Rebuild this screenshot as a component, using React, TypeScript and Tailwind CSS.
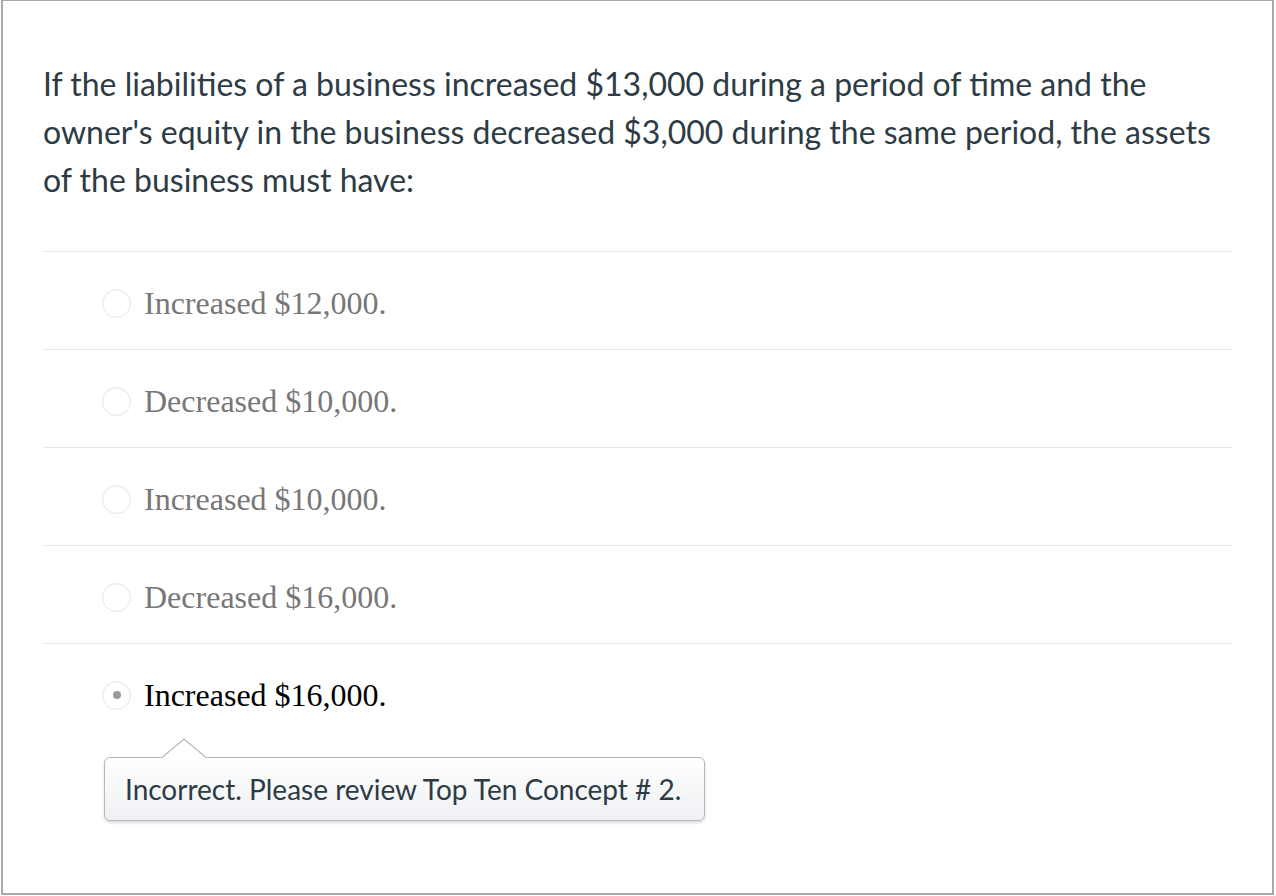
import React from 'react';

const options = [
  { label: 'Increased $12,000.', selected: false },
  { label: 'Decreased $10,000.', selected: false },
  { label: 'Increased $10,000.', selected: false },
  { label: 'Decreased $16,000.', selected: false },
  { label: 'Increased $16,000.', selected: true },
];

const Radio: React.FC<{ checked: boolean }> = ({ checked }) => (
  <span className="flex h-[29px] w-[29px] shrink-0 items-center justify-center rounded-full border border-[#e6e6e6] bg-white shadow-[inset_0_1px_2px_rgba(0,0,0,0.04)]">
    {checked && <span className="h-[8px] w-[8px] rounded-full bg-[#9a9a9a]" />}
  </span>
);

export default function App() {
  return (
    <div className="h-[896px] w-[1276px] bg-white">
      <div className="ml-[1px] h-[895px] w-[1273px] border-t border-b-2 border-l-2 border-r-2 border-[#a9a9a9] bg-white">
        <div className="px-[40px] pt-[59px]">
          <p className="w-[1190px] font-['Lato','Noto_Sans',sans-serif] text-[32px] leading-[48px] text-[#2d3b45]">
            If the liabilities of a business increased $13,000 during a period of time and the owner's equity in the
            business decreased $3,000 during the same period, the assets of the business must have:
          </p>

          <div className="mt-[47px] w-[1190px]">
            {options.map((o) => (
              <div key={o.label} className="border-t border-[#e8e8e8]">
                <div className="flex h-[97px] items-center gap-[13px] pl-[59px] pt-[5px]">
                  <Radio checked={o.selected} />
                  <span
                    className={`font-['Liberation_Serif','Times_New_Roman',serif] text-[32px] ${
                      o.selected ? 'text-black' : 'text-[#777777]'
                    }`}
                  >
                    {o.label}
                  </span>
                </div>
              </div>
            ))}
          </div>

          <div className="relative ml-[61px] mt-[16px] w-[601px]">
            <svg className="absolute left-[58px] top-[-19px]" width="44" height="20" viewBox="0 0 44 20">
              <path d="M0 19.5 L22 1 L44 19.5" fill="#ffffff" stroke="#b4b8bc" strokeWidth="1.2" />
            </svg>
            <div className="rounded-[6px] border border-[#b4b8bc] bg-gradient-to-b from-white to-[#eef0f3] px-[20px] py-[14px] shadow-[0_2px_3px_rgba(0,0,0,0.15)]">
              <span className="font-['Lato','Noto_Sans',sans-serif] text-[28px] leading-[34px] text-[#2d3b45]">
                Incorrect. Please review Top Ten Concept # 2.
              </span>
            </div>
            <svg className="absolute left-[59px] top-[-0.5px]" width="42" height="3" viewBox="0 0 42 3">
              <rect x="0" y="0" width="42" height="3" fill="#ffffff" />
            </svg>
          </div>
        </div>
      </div>
    </div>
  );
}
